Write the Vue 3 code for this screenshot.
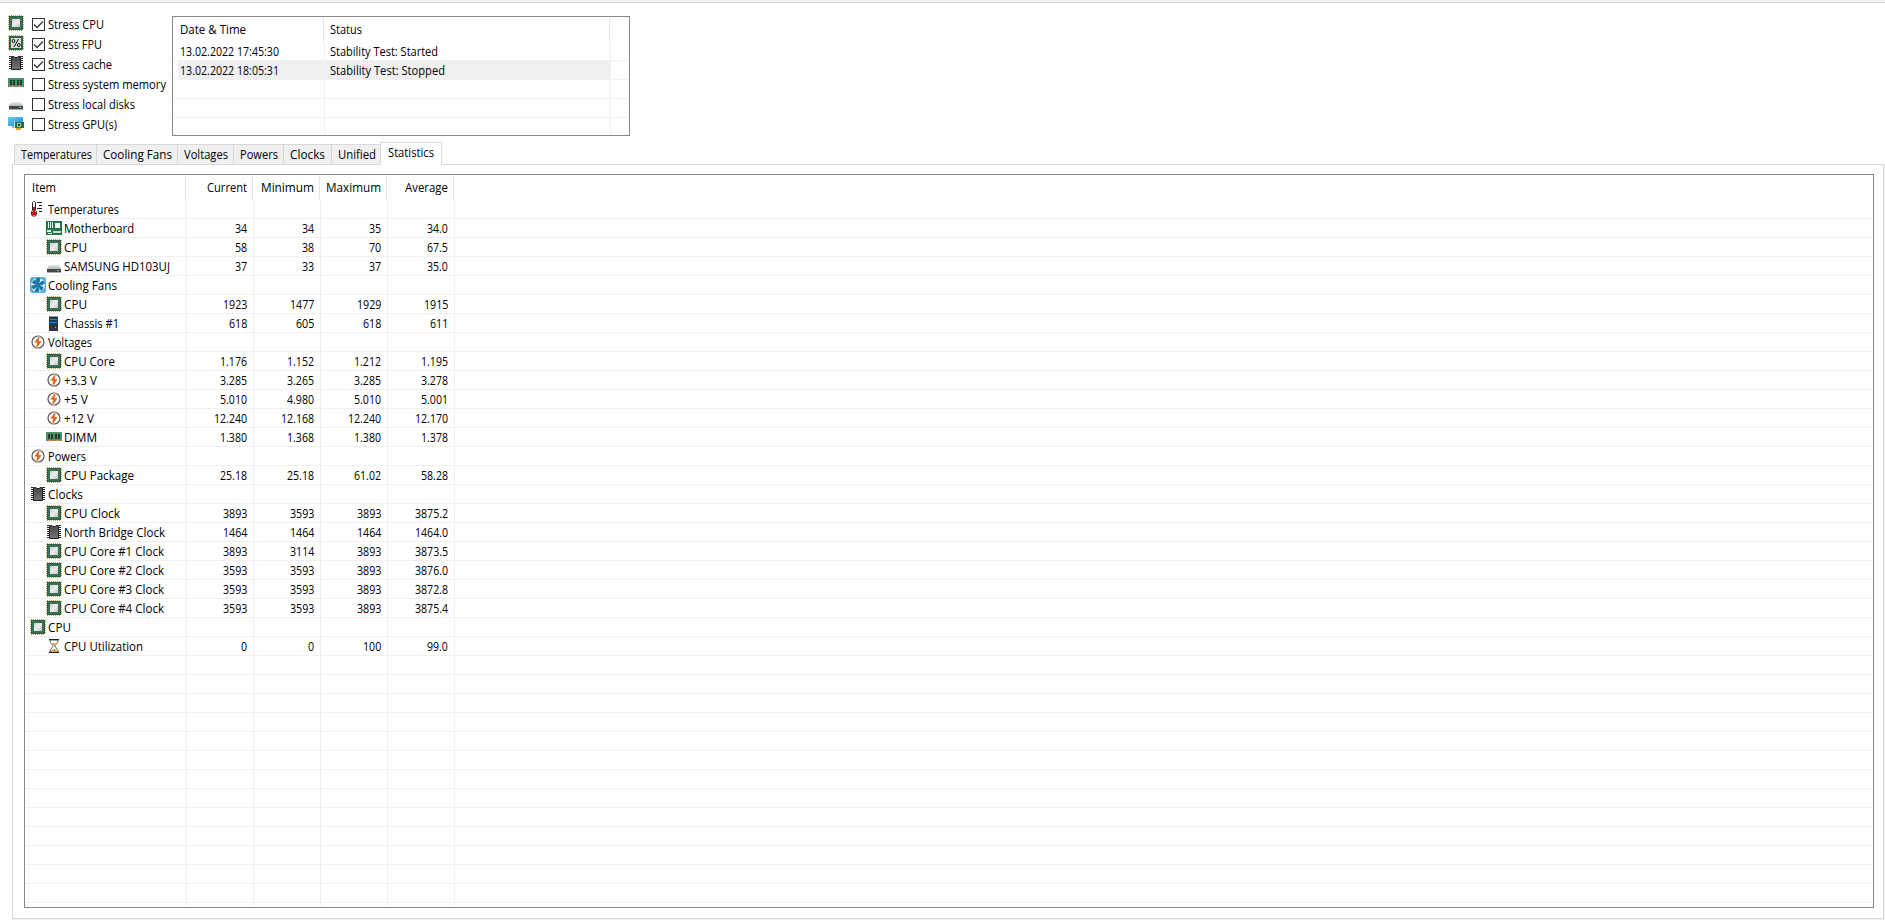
<template>
  <div class="window">
    <div class="top">
      <div class="options">
        <label v-for="o in options" :key="o.label" class="option">
          <svg class="icon" viewBox="0 0 16 16"><use :href="'#i-' + o.icon" /></svg>
          <span class="box" @click="o.on = !o.on">
            <svg v-if="o.on" viewBox="0 0 11 11"><path d="M1 5.500 4 8.500 10 2.500" /></svg>
          </span>
          <span class="t"><Txt :w="o.w" :s="o.label" /></span>
        </label>
      </div>

      <div class="list log">
        <div class="head">
          <span><Txt :w="66" s="Date &amp; Time" /></span><span><Txt :w="32" s="Status" /></span>
        </div>
        <div v-for="(r, i) in log" :key="i" class="row" :class="{ selected: i === 1 }">
          <span class="cell"><Txt v-if="r" :w="r.dw" :s="r.date" /></span>
          <span class="cell"><Txt v-if="r" :w="r.sw" :s="r.status" /></span>
        </div>
        <div class="row rest"><span class="cell"></span><span class="cell"></span></div>
      </div>
    </div>

    <div class="tabs">
      <button v-for="t in tabs" :key="t.name" class="tab" :class="{ active: t.name === activeTab }" :style="{ width: t.w + 'px' }" @click="activeTab = t.name">
        <Txt :w="t.tw" :s="t.name" />
      </button>
    </div>

    <div class="panel">
      <div class="list stats">
        <div class="head">
          <span><Txt :w="24" s="Item" /></span>
          <span><Txt :w="40" s="Current" /></span>
          <span><Txt :w="53" s="Minimum" /></span>
          <span><Txt :w="55" s="Maximum" /></span>
          <span><Txt :w="43" s="Average" /></span>
        </div>
        <div v-for="(r, i) in rows" :key="i" class="row">
          <span class="cell name" :class="{ child: r.v }">
            <svg class="icon" viewBox="0 0 16 16"><use :href="'#i-' + r.icon" /></svg>
            <Txt :w="r.w" :s="r.name" />
          </span>
          <span v-for="c in 4" :key="c" class="cell num"><Txt v-if="r.v" :w="numWidth(r.v[c - 1])" :s="r.v[c - 1]" /></span>
        </div>
        <div v-for="i in 13" :key="'e' + i" class="row"><span v-for="c in 5" :key="c" class="cell"></span></div>
        <div class="row rest"><span v-for="c in 5" :key="c" class="cell"></span></div>
      </div>
    </div>

    <svg class="defs" width="0" height="0">
      <linearGradient id="die" x1="0" y1="0" x2="1" y2="1"><stop offset="0" stop-color="#cfcfcf" /><stop offset=".5" stop-color="#ebebeb" /><stop offset="1" stop-color="#c4c4c4" /></linearGradient>
      <linearGradient id="metal" x1="0" y1="0" x2="0" y2="1"><stop offset="0" stop-color="#e6e6e6" /><stop offset="1" stop-color="#b8b8b8" /></linearGradient>
      <linearGradient id="screen" x1="0" y1="0" x2="1" y2="1"><stop offset="0" stop-color="#6ccbf8" /><stop offset="1" stop-color="#1a86d8" /></linearGradient>
      <linearGradient id="body" x1="0" y1="0" x2="0" y2="1"><stop offset="0" stop-color="#48484a" /><stop offset="1" stop-color="#747477" /></linearGradient>
      <symbol id="i-cpu" viewBox="0 0 16 16">
        <path d="M1 .500h14M1 15.500h14M.500 1v14M15.500 1v14" stroke="#c9a044" stroke-dasharray="1 1" />
        <rect x="1" y="1" width="14" height="14" fill="#2c5f46" /><rect x="2" y="2" width="12" height="12" fill="#3a7056" />
        <rect x="4" y="4" width="8" height="8" fill="url(#die)" />
      </symbol>
      <symbol id="i-fpu" viewBox="0 0 16 16">
        <path d="M1 .500h14M1 15.500h14M.500 1v14M15.500 1v14" stroke="#c9a044" stroke-dasharray="1 1" />
        <rect x="1" y="1" width="14" height="14" fill="#2f6349" /><rect x="3" y="3" width="10" height="10" fill="#dcdcdc" />
        <path d="M10.500 4 6 12" stroke="#111" /><ellipse cx="5.500" cy="6" rx="1.300" ry="1.700" fill="none" stroke="#111" /><ellipse cx="10.800" cy="10" rx="1.300" ry="1.700" fill="none" stroke="#111" />
      </symbol>
      <symbol id="i-chip" viewBox="0 0 16 16">
        <path d="M1 1.500h2M1 3.500h2M1 5.500h2M1 7.500h2M1 9.500h2M1 11.500h2M1 13.500h2M13 1.500h2M13 3.500h2M13 5.500h2M13 7.500h2M13 9.500h2M13 11.500h2M13 13.500h2" stroke="#222" />
        <path d="M3.500 1.500h2l1.500 1h2l1.500-1h2v13h-9z" fill="url(#body)" stroke="#222" />
      </symbol>
      <symbol id="i-ram" viewBox="0 0 16 16">
        <path d="M0 3h16v9H0z" fill="#4a9467" /><path d="M2 5h2v5H2zM5 5h2v5H5zM9 5h2v5H9zM12 5h2v5h-2z" fill="#2a3832" /><path d="M2 11h5v1H2zM9 11h5v1H9z" fill="#df8546" />
      </symbol>
      <symbol id="i-disk" viewBox="0 0 16 16">
        <path d="M3 7h10l2 4H1z" fill="url(#metal)" /><path d="M1 11h14v3H1z" fill="#484848" /><path d="M1 14h14v1H1z" fill="#aaa" /><path d="M11 12h2v1h-2z" fill="#4ee069" />
      </symbol>
      <symbol id="i-gpu" viewBox="0 0 16 16">
        <path d="M0 2h15v9H0z" fill="url(#screen)" /><path d="M4 11h3v2H4z" fill="#b5b5b5" />
        <path d="M6 7h10v6H6z" fill="#2a7047" /><path d="M6 6h1v9H6z" fill="#ddd" /><path d="M9 8h4v4H9z" fill="#9fc4ae" /><path d="M10 9h2v2h-2z" fill="#234c36" /><path d="M8 13h5v2H8z" fill="#efa02b" />
      </symbol>
      <symbol id="i-temp" viewBox="0 0 16 16">
        <path d="M2.500 9.500v-8l1-1h1l1 1v8l1 1.500v2.500l-1 1.500h-3l-1-1.500V11z" fill="#fff" stroke="#222" />
        <path d="M3 6h2v5h1v3H2v-3h1z" fill="#e01010" /><path d="M7 1.500h5M9 4.500h3M7 7.500h5M9 10.500h3" stroke="#222" />
      </symbol>
      <symbol id="i-board" viewBox="0 0 16 16">
        <path d="M0 1h16v14H0z" fill="#23744a" /><path d="M2 2h1v6H2zM4 2h1v6H4zM6 2h1v6H6zM9 3h5v5H9zM1 10h4v2H1zM2 13h4v1H2z" fill="#f0f7f3" /><path d="M7 11h8v2H7z" fill="#c3dccc" />
      </symbol>
      <symbol id="i-fan" viewBox="0 0 16 16">
        <rect width="16" height="16" rx="2.500" fill="#58aed6" /><circle cx="8" cy="8" r="7" fill="#e8f4fa" />
        <path d="M8 8 6 2q1-1.500 4-.5L9 6zM8 8l4-4q2 0 2.500 2.500L11 8zM8 8l5 2q.5 2-2 3.500L9 10zM8 8l1 6q-1.500 1.500-4 0L7 10zM8 8l-4 4q-2-.5-2.500-3L5 8zM8 8 2.500 6Q2.500 4 5 3l2 3z" fill="#1673a8" stroke="#1673a8" stroke-width=".8" />
      </symbol>
      <symbol id="i-case" viewBox="0 0 16 16">
        <path d="M4 1h7l1 1v14H3V2z" fill="#30353c" /><path d="M4 1h7l1 1H3z" fill="#8a9099" /><path d="M4 4h7v1H4zM4 7h7v1H4z" fill="#178bf4" /><path d="M9 12h1v1H9z" fill="#7fd0e8" />
      </symbol>
      <symbol id="i-volt" viewBox="0 0 16 16">
        <circle cx="8" cy="8" r="6" fill="#fff" stroke="#555" stroke-width="1.200" />
        <path d="M10.500 0 4 8.800h3L5.500 16 12 7H8.800z" fill="#dc6416" stroke="#fff" stroke-width=".4" />
      </symbol>
      <symbol id="i-glass" viewBox="0 0 16 16">
        <path d="M4 2c0 4 3 4 3 6s-3 2-3 6h8c0-4-3-4-3-6s3-2 3-6z" fill="#fff" stroke="#444" /><path d="M6 5h4L8 7.500zM5 13.500q0-2 3-2.500 3 .5 3 2.500z" fill="#f0a020" /><path d="M3 1.500h10M3 14.500h10" stroke="#222" />
      </symbol>
    </svg>
  </div>
</template>

<script setup>
import { ref, h } from 'vue';

// text fitted to a fixed advance width
const Txt = (p) => h('svg', { width: p.w, height: 16, style: 'display:block;flex:none;overflow:visible' },
  [h('text', { x: 0, y: 12, textLength: p.w, lengthAdjust: 'spacingAndGlyphs' }, p.s)]);
Txt.props = ['w', 's'];

const numWidth = (s) => [...s].reduce((n, c) => n + (c === '.' ? 2.6 : 6.1), 0);

const options = ref([
  { label: 'Stress CPU', icon: 'cpu', on: true, w: 56 },
  { label: 'Stress FPU', icon: 'fpu', on: true, w: 54 },
  { label: 'Stress cache', icon: 'chip', on: true, w: 64 },
  { label: 'Stress system memory', icon: 'ram', on: false, w: 118 },
  { label: 'Stress local disks', icon: 'disk', on: false, w: 87 },
  { label: 'Stress GPU(s)', icon: 'gpu', on: false, w: 69 },
]);

const log = [
  { date: '13.02.2022 17:45:30', dw: 99, status: 'Stability Test: Started', sw: 108 },
  { date: '13.02.2022 18:05:31', dw: 99, status: 'Stability Test: Stopped', sw: 115 },
  null,
  null,
];

const activeTab = ref('Statistics');
const tabs = [
  { name: 'Temperatures', w: 82, tw: 71 },
  { name: 'Cooling Fans', w: 81, tw: 69 },
  { name: 'Voltages', w: 56, tw: 44 },
  { name: 'Powers', w: 50, tw: 38 },
  { name: 'Clocks', w: 48, tw: 35 },
  { name: 'Unified', w: 49, tw: 38 },
  { name: 'Statistics', w: 62, tw: 46 },
];

const rows = [
  { name: 'Temperatures', icon: 'temp', w: 71 },
  { name: 'Motherboard', icon: 'board', w: 70, v: ['34', '34', '35', '34.0'] },
  { name: 'CPU', icon: 'cpu', w: 23, v: ['58', '38', '70', '67.5'] },
  { name: 'SAMSUNG HD103UJ', icon: 'disk', w: 106, v: ['37', '33', '37', '35.0'] },
  { name: 'Cooling Fans', icon: 'fan', w: 69 },
  { name: 'CPU', icon: 'cpu', w: 23, v: ['1923', '1477', '1929', '1915'] },
  { name: 'Chassis #1', icon: 'case', w: 55, v: ['618', '605', '618', '611'] },
  { name: 'Voltages', icon: 'volt', w: 44 },
  { name: 'CPU Core', icon: 'cpu', w: 51, v: ['1.176', '1.152', '1.212', '1.195'] },
  { name: '+3.3 V', icon: 'volt', w: 33, v: ['3.285', '3.265', '3.285', '3.278'] },
  { name: '+5 V', icon: 'volt', w: 24, v: ['5.010', '4.980', '5.010', '5.001'] },
  { name: '+12 V', icon: 'volt', w: 30, v: ['12.240', '12.168', '12.240', '12.170'] },
  { name: 'DIMM', icon: 'ram', w: 33, v: ['1.380', '1.368', '1.380', '1.378'] },
  { name: 'Powers', icon: 'volt', w: 38 },
  { name: 'CPU Package', icon: 'cpu', w: 70, v: ['25.18', '25.18', '61.02', '58.28'] },
  { name: 'Clocks', icon: 'chip', w: 35 },
  { name: 'CPU Clock', icon: 'cpu', w: 56, v: ['3893', '3593', '3893', '3875.2'] },
  { name: 'North Bridge Clock', icon: 'chip', w: 101, v: ['1464', '1464', '1464', '1464.0'] },
  { name: 'CPU Core #1 Clock', icon: 'cpu', w: 100, v: ['3893', '3114', '3893', '3873.5'] },
  { name: 'CPU Core #2 Clock', icon: 'cpu', w: 100, v: ['3593', '3593', '3893', '3876.0'] },
  { name: 'CPU Core #3 Clock', icon: 'cpu', w: 100, v: ['3593', '3593', '3893', '3872.8'] },
  { name: 'CPU Core #4 Clock', icon: 'cpu', w: 100, v: ['3593', '3593', '3893', '3875.4'] },
  { name: 'CPU', icon: 'cpu', w: 23 },
  { name: 'CPU Utilization', icon: 'glass', w: 79, v: ['0', '0', '100', '99.0'] },
];
</script>

<style scoped>
.window { width: 1885px; height: 920px; box-sizing: border-box; border-top: 2px solid #f0f0f0; background: #fff; font: 12px "Open Sans", "Noto Sans", sans-serif; color: #000; overflow: hidden; }
.top { display: flex; height: 140px; box-sizing: border-box; border-top: 1px solid #d9d9d9; padding: 12px 0 0 8px; }
.options { width: 164px; }
.option { display: flex; height: 20px; }
.icon { width: 16px; height: 16px; flex: none; }
.box { width: 13px; height: 13px; box-sizing: border-box; border: 1px solid #333; margin: 3px 3px 0 8px; flex: none; }
.box svg { display: block; width: 11px; height: 11px; fill: none; stroke: #333; stroke-width: 1.3; }
.t { padding-top: 2px; }
.list { box-sizing: border-box; border: 1px solid #828790; padding: 1px; background: #fff; display: flex; flex-direction: column; }
.log { width: 458px; height: 120px; margin-top: 1px; }
.head { display: flex; height: 24px; flex: none; }
.head span { box-sizing: border-box; border-right: 1px solid #e5e5e5; padding: 4px 5px 0 6px; display: flex; }
.row { display: flex; height: 19px; flex: none; box-sizing: border-box; border-bottom: 1px solid #f0f0f0; }
.rest { flex: 1; height: auto; border: 0; }
.cell { box-sizing: border-box; border-right: 1px solid #f0f0f0; padding: 2px 5px 0 6px; display: flex; height: 100%; }
.log .head span:first-child { width: 150px; }
.log .head span:last-child { width: 286px; padding-left: 6px; }
.log .cell:first-child { width: 151px; }
.log .cell:last-child { width: 286px; padding-left: 5px; }
.selected .cell { background: #f0f0f0; }
.selected .cell:first-child { width: 147px; margin-left: 4px; padding-left: 2px; }
.tabs { display: flex; align-items: flex-end; height: 22px; padding-left: 14px; }
.tab { height: 20px; box-sizing: border-box; margin: 0; padding: 2px 0 0 6px; border: 1px solid #d9d9d9; border-width: 1px 0 0 1px; background: #f0f0f0; font: inherit; display: flex; align-items: flex-start; }
.tab.active { height: 23px; margin-bottom: -1px; padding-left: 7px; border-right-width: 1px; background: #fff; position: relative; }
.panel { width: 1872px; height: 755px; box-sizing: border-box; margin-left: 12px; border: 1px solid #d9d9d9; padding: 9px 0 0 11px; box-shadow: 1px 1px #f0f0f0; }
.stats { width: 1850px; height: 734px; }
.stats .head span { width: 67px; justify-content: flex-end; }
.stats .head span:first-child { width: 160px; justify-content: flex-start; }
.stats .cell { width: 67px; }
.stats .cell:first-child { width: 161px; }
.stats .name { padding: 1px 0 0 4px; }
.stats .name.child { padding-left: 20px; }
.name > svg:last-child { margin: 1px 0 0 2px; }
.stats .num { justify-content: flex-end; padding-right: 6px; }
.defs { display: block; }
</style>

<style>
body { background: #fff; overflow: hidden; }
</style>
